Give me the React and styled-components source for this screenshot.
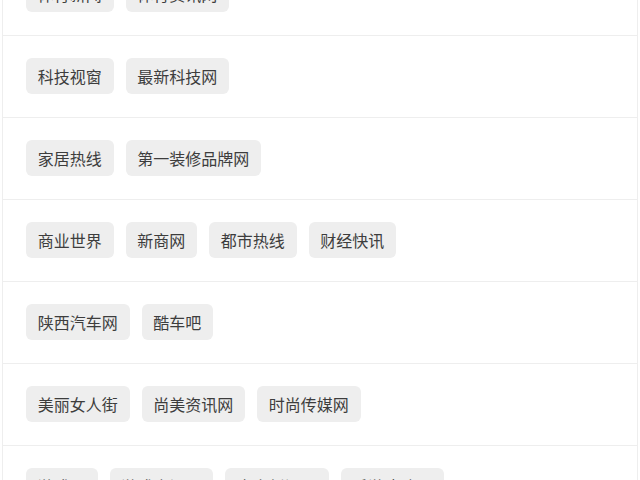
import styled, { createGlobalStyle } from 'styled-components';

const Global = createGlobalStyle`
  html, body {
    margin: 0;
    padding: 0;
    background: #ffffff;
    overflow: hidden;
  }
  body {
    font-family: "Noto Sans CJK SC", "Noto Sans", sans-serif;
  }
`;

const Board = styled.div`
  margin: -46px 2px 0;
  border-left: 1px solid #eeeeee;
  border-right: 1px solid #eeeeee;
  background: #ffffff;
`;

const Row = styled.div`
  display: flex;
  flex-wrap: wrap;
  gap: 12px;
  padding: 22px 23px 23px;
  border-bottom: 1px solid #eeeeee;
`;

const Tag = styled.a`
  display: inline-flex;
  align-items: center;
  height: 36px;
  padding: 0 11.75px;
  border-radius: 6px;
  background: #eeeeee;
  color: #3d3d3d;
  font-size: 16px;
  line-height: 1;
  text-decoration: none;
  white-space: nowrap;
  cursor: pointer;

  &:hover { background: #e6e6e6; }
`;

const groups = [
  ['体育新闻', '体育资讯网'],
  ['科技视窗', '最新科技网'],
  ['家居热线', '第一装修品牌网'],
  ['商业世界', '新商网', '都市热线', '财经快讯'],
  ['陕西汽车网', '酷车吧'],
  ['美丽女人街', '尚美资讯网', '时尚传媒网'],
  ['游戏网', '游戏资讯网', '电竞新闻网', '手游攻略网'],
];

export default function App() {
  return (
    <>
      <Global />
      <Board>
        {groups.map((tags, i) => (
          <Row key={i}>
            {tags.map((t) => (
              <Tag key={t}>{t}</Tag>
            ))}
          </Row>
        ))}
      </Board>
    </>
  );
}
